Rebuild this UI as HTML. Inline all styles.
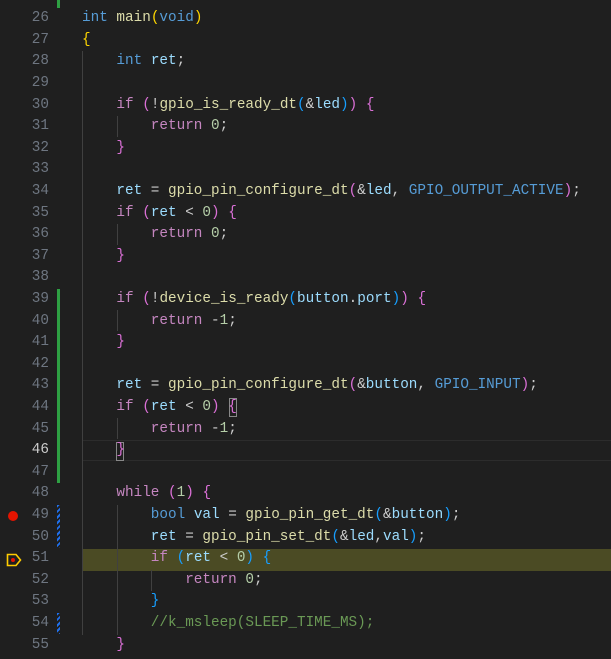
<!DOCTYPE html>
<html><head><style>
body{margin:0;width:611px;height:659px;background:#1f1f1f;overflow:hidden;position:relative;font-family:"Liberation Mono",monospace;font-size:14.33px}
.l{position:absolute;left:0;width:611px;height:21.6px;line-height:21.6px;white-space:pre}
.n{position:absolute;right:562px;color:#6e7681;text-align:right}
.c{position:absolute;left:82px;color:#cccccc}
.k{color:#569cd6}.f{color:#dcdcaa}.y{color:#ffd700}.p{color:#da70d6}.b{color:#179fff}.ctl{color:#c586c0}.v{color:#9cdcfe}.num{color:#b5cea8}.cm{color:#6a9955}
.g{position:absolute;width:1px;background:#404040}
</style></head><body>
<div style="position:absolute;left:57px;top:0;width:3px;height:8px;background:#2ea043"></div>
<div style="position:absolute;left:57px;top:289px;width:3px;height:194px;background:#2ea043"></div>
<div style="position:absolute;left:57px;top:505px;width:3px;height:43px;background:repeating-linear-gradient(135deg,#1f6feb 0 2px,#1f1f1f 2px 4px)"></div>
<div style="position:absolute;left:57px;top:613px;width:3px;height:21px;background:repeating-linear-gradient(135deg,#1f6feb 0 2px,#1f1f1f 2px 4px)"></div>
<div style="position:absolute;left:82px;top:549px;width:529px;height:21.6px;background:#4b4b24"></div>
<div style="position:absolute;left:82px;top:440px;width:529px;height:19px;border-top:1px solid #2c2c2c;border-bottom:1px solid #2c2c2c"></div>
<div class="g" style="left:82px;top:51px;height:584px"></div>
<div class="g" style="left:117px;top:116px;height:21px"></div>
<div class="g" style="left:117px;top:224px;height:21px"></div>
<div class="g" style="left:117px;top:310px;height:21px"></div>
<div class="g" style="left:117px;top:418px;height:21px"></div>
<div class="g" style="left:117px;top:505px;height:130px"></div>
<div class="g" style="left:151px;top:570px;height:21px"></div>
<div style="position:absolute;left:229px;top:398px;width:6px;height:17px;border:1px solid #888"></div>
<div style="position:absolute;left:116px;top:442px;width:6px;height:17px;border:1px solid #888"></div>
<div style="position:absolute;left:8px;top:511px;width:10px;height:10px;border-radius:50%;background:#e51400"></div>
<svg style="position:absolute;left:6px;top:553px" width="16" height="14" viewBox="0 0 16 14"><path d="M1.5 1.5H10L14.5 7L10 12.5H1.5Z" fill="none" stroke="#ffcc00" stroke-width="1.6"/><circle cx="7" cy="7" r="2" fill="#e51400"/></svg>
<div class="l" style="top:-13.4px"><span class="n">25</span></div>
<div class="l" style="top:8.2px"><span class="n">26</span><span class="c"><span class="k">int</span> <span class="f">main</span><span class="y">(</span><span class="k">void</span><span class="y">)</span></span></div>
<div class="l" style="top:29.8px"><span class="n">27</span><span class="c"><span class="y">{</span></span></div>
<div class="l" style="top:51.4px"><span class="n">28</span><span class="c">    <span class="k">int</span> <span class="v">ret</span>;</span></div>
<div class="l" style="top:73px"><span class="n">29</span></div>
<div class="l" style="top:94.6px"><span class="n">30</span><span class="c">    <span class="ctl">if</span> <span class="p">(</span>!<span class="f">gpio_is_ready_dt</span><span class="b">(</span>&amp;<span class="v">led</span><span class="b">)</span><span class="p">)</span> <span class="p">{</span></span></div>
<div class="l" style="top:116.2px"><span class="n">31</span><span class="c">        <span class="ctl">return</span> <span class="num">0</span>;</span></div>
<div class="l" style="top:137.8px"><span class="n">32</span><span class="c">    <span class="p">}</span></span></div>
<div class="l" style="top:159.4px"><span class="n">33</span></div>
<div class="l" style="top:181px"><span class="n">34</span><span class="c">    <span class="v">ret</span> = <span class="f">gpio_pin_configure_dt</span><span class="p">(</span>&amp;<span class="v">led</span>, <span class="k">GPIO_OUTPUT_ACTIVE</span><span class="p">)</span>;</span></div>
<div class="l" style="top:202.6px"><span class="n">35</span><span class="c">    <span class="ctl">if</span> <span class="p">(</span><span class="v">ret</span> &lt; <span class="num">0</span><span class="p">)</span> <span class="p">{</span></span></div>
<div class="l" style="top:224.2px"><span class="n">36</span><span class="c">        <span class="ctl">return</span> <span class="num">0</span>;</span></div>
<div class="l" style="top:245.8px"><span class="n">37</span><span class="c">    <span class="p">}</span></span></div>
<div class="l" style="top:267.4px"><span class="n">38</span></div>
<div class="l" style="top:289px"><span class="n">39</span><span class="c">    <span class="ctl">if</span> <span class="p">(</span>!<span class="f">device_is_ready</span><span class="b">(</span><span class="v">button</span>.<span class="v">port</span><span class="b">)</span><span class="p">)</span> <span class="p">{</span></span></div>
<div class="l" style="top:310.6px"><span class="n">40</span><span class="c">        <span class="ctl">return</span> -<span class="num">1</span>;</span></div>
<div class="l" style="top:332.2px"><span class="n">41</span><span class="c">    <span class="p">}</span></span></div>
<div class="l" style="top:353.8px"><span class="n">42</span></div>
<div class="l" style="top:375.4px"><span class="n">43</span><span class="c">    <span class="v">ret</span> = <span class="f">gpio_pin_configure_dt</span><span class="p">(</span>&amp;<span class="v">button</span>, <span class="k">GPIO_INPUT</span><span class="p">)</span>;</span></div>
<div class="l" style="top:397px"><span class="n">44</span><span class="c">    <span class="ctl">if</span> <span class="p">(</span><span class="v">ret</span> &lt; <span class="num">0</span><span class="p">)</span> <span class="p">{</span></span></div>
<div class="l" style="top:418.6px"><span class="n">45</span><span class="c">        <span class="ctl">return</span> -<span class="num">1</span>;</span></div>
<div class="l" style="top:440.2px"><span class="n" style="color:#cccccc">46</span><span class="c">    <span class="p">}</span></span></div>
<div class="l" style="top:461.8px"><span class="n">47</span></div>
<div class="l" style="top:483.4px"><span class="n">48</span><span class="c">    <span class="ctl">while</span> <span class="p">(</span><span class="num">1</span><span class="p">)</span> <span class="p">{</span></span></div>
<div class="l" style="top:505px"><span class="n">49</span><span class="c">        <span class="k">bool</span> <span class="v">val</span> = <span class="f">gpio_pin_get_dt</span><span class="b">(</span>&amp;<span class="v">button</span><span class="b">)</span>;</span></div>
<div class="l" style="top:526.6px"><span class="n">50</span><span class="c">        <span class="v">ret</span> = <span class="f">gpio_pin_set_dt</span><span class="b">(</span>&amp;<span class="v">led</span>,<span class="v">val</span><span class="b">)</span>;</span></div>
<div class="l" style="top:548.2px"><span class="n">51</span><span class="c">        <span class="ctl">if</span> <span class="b">(</span><span class="v">ret</span> &lt; <span class="num">0</span><span class="b">)</span> <span class="b">{</span></span></div>
<div class="l" style="top:569.8px"><span class="n">52</span><span class="c">            <span class="ctl">return</span> <span class="num">0</span>;</span></div>
<div class="l" style="top:591.4px"><span class="n">53</span><span class="c">        <span class="b">}</span></span></div>
<div class="l" style="top:613px"><span class="n">54</span><span class="c">        <span class="cm">//k_msleep(SLEEP_TIME_MS);</span></span></div>
<div class="l" style="top:634.6px"><span class="n">55</span><span class="c">    <span class="p">}</span></span></div>
</body></html>
